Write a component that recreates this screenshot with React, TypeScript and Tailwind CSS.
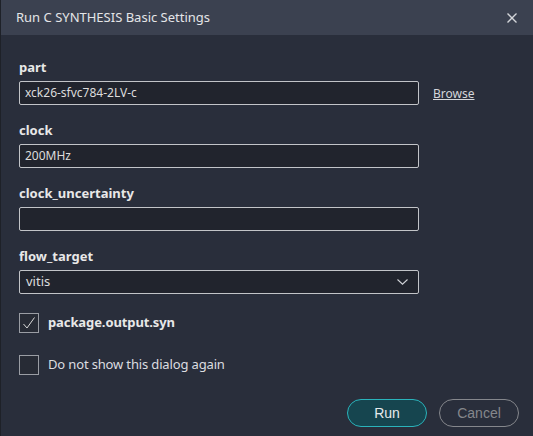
import { useState } from 'react';

interface FieldProps {
  label: string;
  children: React.ReactNode;
}

function Field({ label, children }: FieldProps) {
  return (
    <div className="flex flex-col">
      <div className="h-[18px] text-[13px] font-bold leading-[18px] text-[#e8e8e8]">{label}</div>
      <div className="mt-[5px]">{children}</div>
    </div>
  );
}

function TextBox({ value }: { value: string }) {
  return (
    <div className="flex h-[24px] w-[400px] items-center rounded-[2px] border border-[#c2c4c8] bg-[#21242d] px-[5px] text-[12px] text-[#dcdcdc]">
      {value}
    </div>
  );
}

function CheckBox({ checked }: { checked: boolean }) {
  return (
    <div className="flex h-[20px] w-[20px] shrink-0 items-center justify-center border border-[#9a9da4] bg-[#272b35]">
      {checked && (
        <svg width="16" height="16" viewBox="0 0 16 16" fill="none">
          <polyline points="2.5,9 6,13 13.5,2.5" stroke="#d8d8d8" strokeWidth="1" />
        </svg>
      )}
    </div>
  );
}

export default function App() {
  const [pkg, setPkg] = useState(true);
  const [hide, setHide] = useState(false);

  return (
    <div
      className="flex h-[436px] w-[533px] flex-col border-l border-[#1e2128] bg-[#292e3b]"
      style={{ fontFamily: '"Noto Sans", "Open Sans", sans-serif' }}
    >
      {/* Title bar */}
      <div className="flex h-[35px] shrink-0 items-center justify-between bg-[#3b4150] pl-[15px] pr-[16px]">
        <span className="text-[13px] text-[#e4e5e8]">Run C SYNTHESIS Basic Settings</span>
        <svg width="10" height="10" viewBox="0 0 10 10" stroke="#d4d6da" strokeWidth="1.3">
          <line x1="0.5" y1="0.5" x2="9.5" y2="9.5" />
          <line x1="9.5" y1="0.5" x2="0.5" y2="9.5" />
        </svg>
      </div>

      {/* Body */}
      <div className="flex flex-1 flex-col px-[18px] pt-[23px]">
        <div className="flex flex-col gap-[16px]">
          <Field label="part">
            <div className="flex items-center">
              <TextBox value="xck26-sfvc784-2LV-c" />
              <span className="ml-[14px] mt-[2px] text-[12px] text-[#d4d6da] underline">Browse</span>
            </div>
          </Field>
          <Field label="clock">
            <TextBox value="200MHz" />
          </Field>
          <Field label="clock_uncertainty">
            <TextBox value="" />
          </Field>
          <Field label="flow_target">
            <div className="flex h-[24px] w-[400px] items-center justify-between rounded-[2px] border border-[#c2c4c8] bg-[#21242d] pl-[6px] pr-[10px] text-[13px] text-[#dcdcdc]">
              <span>vitis</span>
              <svg width="11" height="6" viewBox="0 0 11 6" fill="none" stroke="#d0d2d6" strokeWidth="1.1">
                <polyline points="0.5,0.5 5.5,5.2 10.5,0.5" />
              </svg>
            </div>
          </Field>
        </div>

        <div className="mt-[19px] flex cursor-pointer items-center gap-[9px]" onClick={() => setPkg((v) => !v)}>
          <CheckBox checked={pkg} />
          <span className="text-[13px] font-bold tracking-[-0.1px] text-[#e8e8e8]">package.output.syn</span>
        </div>

        <div className="mt-[22px] flex cursor-pointer items-center gap-[9px]" onClick={() => setHide((v) => !v)}>
          <CheckBox checked={hide} />
          <span className="text-[13px] tracking-[-0.15px] text-[#dcdde0]">Do not show this dialog again</span>
        </div>

        <div className="-mr-[4px] mt-[24px] flex justify-end gap-[12px]">
          <button
            className="h-[28px] w-[80px] rounded-full border border-[#2ab3bb] bg-[#16454f] text-[14px] text-[#e6eaec]"
            style={{ fontFamily: '"Liberation Sans", Arial, sans-serif' }}
          >
            Run
          </button>
          <button
            className="h-[28px] w-[80px] rounded-full border border-[#85878c] bg-transparent text-[14px] text-[#85878c]"
            style={{ fontFamily: '"Liberation Sans", Arial, sans-serif' }}
          >
            Cancel
          </button>
        </div>
      </div>
    </div>
  );
}
